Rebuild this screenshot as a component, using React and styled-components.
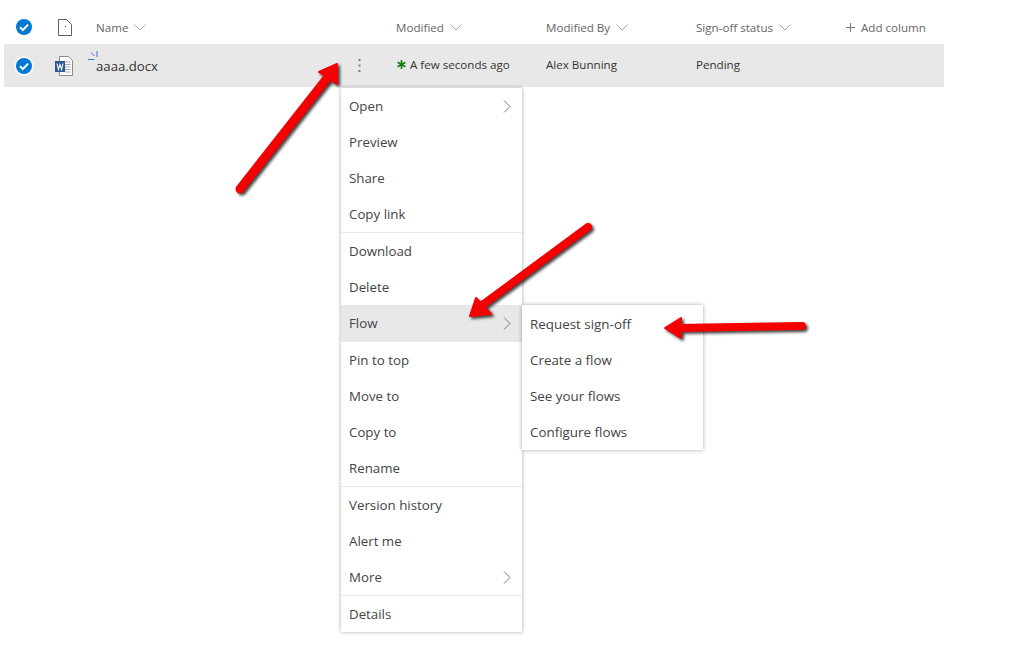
import React from 'react'
import styled, { createGlobalStyle } from 'styled-components'

const GlobalStyle = createGlobalStyle`
  html, body {
    margin: 0;
    padding: 0;
    background: #fff;
  }
  body {
    font-family: "Open Sans", "Liberation Sans", sans-serif;
    color: #333;
  }
`

const columns = '40px 52px 300px 150px 150px 150px 98px'

const menuGroups = [
  [{ label: 'Open', sub: true }, { label: 'Preview' }, { label: 'Share' }, { label: 'Copy link' }],
  [
    { label: 'Download' },
    { label: 'Delete' },
    { label: 'Flow', sub: true, active: true },
    { label: 'Pin to top' },
    { label: 'Move to' },
    { label: 'Copy to' },
    { label: 'Rename' },
  ],
  [{ label: 'Version history' }, { label: 'Alert me' }, { label: 'More', sub: true }],
  [{ label: 'Details' }],
]

const flowItems = ['Request sign-off', 'Create a flow', 'See your flows', 'Configure flows']

const CheckCircle = ({ ring }) => (
  <svg width="20" height="20" viewBox="0 0 20 20">
    {ring && <circle cx="10" cy="10" r="9.5" fill="#fff" />}
    <circle cx="10" cy="10" r="8" fill="#0078d4" />
    <path d="M6 10.3l2.8 2.7L14.2 7.6" fill="none" stroke="#fff" strokeWidth="2" />
  </svg>
)

const FileIcon = () => (
  <svg width="14" height="17" viewBox="0 0 14 17">
    <path d="M.5.5h8l5 5v11H.5z" fill="#fff" stroke="#5f5f5f" strokeWidth="1" />
    <rect x="7" y="7" width="1" height="1" fill="#444" />
  </svg>
)

const WordIcon = () => (
  <svg width="18" height="20" viewBox="0 0 18 20">
    <path d="M4.5.5h9l4 4v15h-13z" fill="#fff" stroke="#8a8a8a" />
    <path d="M10 6h5.5M10 8.5h5.5M10 11h5.5M10 13.5h5.5M10 16h5.5" stroke="#a5a5a5" />
    <rect x="0" y="5" width="10" height="11" fill="#2b5797" />
    <path d="M2 7.5l1.4 6 1.6-5 1.6 5 1.4-6" fill="none" stroke="#fff" strokeWidth="1.1" />
  </svg>
)

const NewMarks = () => (
  <svg width="10" height="10" viewBox="0 0 10 10">
    <path d="M0 8.5h6.5M3 1.5l3.5 3.5M9 0v6" stroke="#3f6fd8" strokeWidth="1" fill="none" />
  </svg>
)

const Chevron = () => (
  <svg width="12" height="7" viewBox="0 0 12 7">
    <path d="M.5.5l5.5 5.5 5.5-5.5" fill="none" stroke="#a6a6a6" strokeWidth="1" />
  </svg>
)

const SubChevron = () => (
  <svg width="8" height="13" viewBox="0 0 8 13">
    <path d="M1 .5l6 6-6 6" fill="none" stroke="#777" strokeWidth="1" />
  </svg>
)

const PlusIcon = () => (
  <svg width="9" height="9" viewBox="0 0 9 9">
    <path d="M4.5 0v9M0 4.5h9" stroke="#777" strokeWidth="1" />
  </svg>
)

const Asterisk = () => (
  <svg width="9" height="9" viewBox="0 0 9 9">
    <path d="M4.5 0v9M.6 2.2l7.8 4.6M.6 6.8l7.8-4.6" stroke="#107c10" strokeWidth="1.6" />
  </svg>
)

const MoreIcon = () => (
  <svg width="3" height="13" viewBox="0 0 3 13">
    <rect x="0.5" y="0" width="2" height="2" fill="#7a7a7a" />
    <rect x="0.5" y="5.5" width="2" height="2" fill="#7a7a7a" />
    <rect x="0.5" y="11" width="2" height="2" fill="#7a7a7a" />
  </svg>
)

const Arrows = () => (
  <ArrowLayer width="1015" height="648" viewBox="0 0 1015 648">
    <g fill="#f40000" stroke="#f40000" strokeLinejoin="round" strokeLinecap="round">
      <path d="M240 189L328 77" strokeWidth="9" fill="none" />
      <path d="M337 64L319 72L337 84Z" strokeWidth="2" />
      <path d="M588 227L481 306" strokeWidth="8" fill="none" />
      <path d="M470 316L476 298L491 314Z" strokeWidth="2" />
      <path d="M802 326L678 328" strokeWidth="8" fill="none" />
      <path d="M665 328L681 318L681 338Z" strokeWidth="2" />
    </g>
  </ArrowLayer>
)

const App = () => {
  return (
    <Page>
      <GlobalStyle />
      <HeaderRow>
        <IconCell><CheckCircle /></IconCell>
        <FileTypeCell><FileIcon /></FileTypeCell>
        <HeaderCell>Name <Chevron /></HeaderCell>
        <HeaderCell>Modified <Chevron /></HeaderCell>
        <HeaderCell>Modified By <Chevron /></HeaderCell>
        <HeaderCell>Sign-off status <Chevron /></HeaderCell>
        <AddColumn><PlusIcon /> Add column</AddColumn>
      </HeaderRow>
      <FileRow>
        <IconCell><CheckCircle ring /></IconCell>
        <FileTypeCell $wide><WordIcon /></FileTypeCell>
        <NameCell>
          <FileName>
            <NewBadge><NewMarks /></NewBadge>
            aaaa.docx
          </FileName>
          <MoreButton><MoreIcon /></MoreButton>
        </NameCell>
        <ModifiedCell><Asterisk /> A few seconds ago</ModifiedCell>
        <Cell>Alex Bunning</Cell>
        <Cell>Pending</Cell>
      </FileRow>

      <Menu>
        {menuGroups.map((group, i) => (
          <MenuGroup key={i}>
            {group.map((item) => (
              <MenuItem key={item.label} $active={item.active}>
                {item.label}
                {item.sub && <SubChevron />}
                {item.active && (
                  <SubMenu>
                    {flowItems.map((flow) => (
                      <SubMenuItem key={flow}>{flow}</SubMenuItem>
                    ))}
                  </SubMenu>
                )}
              </MenuItem>
            ))}
          </MenuGroup>
        ))}
      </Menu>
      <Arrows />
    </Page>
  )
}

export default App

const Page = styled.div`
  position: relative;
  width: 1015px;
  height: 648px;
  overflow: hidden;
  padding: 7px 0 0 4px;
  box-sizing: border-box;
`

const HeaderRow = styled.div`
  display: grid;
  grid-template-columns: ${columns};
  align-items: center;
  width: 940px;
  height: 37px;
`

const FileRow = styled.div`
  display: grid;
  grid-template-columns: ${columns};
  align-items: center;
  width: 940px;
  height: 43px;
  background: #e8e8e8;
`

const IconCell = styled.div`
  display: flex;
  align-items: center;
  justify-content: center;
  margin-top: 3px;

  ${FileRow} & {
    margin-top: 0;
  }
`

const FileTypeCell = styled(IconCell)`
  padding-right: ${(props) => (props.$wide ? '12px' : '10px')};
`

const HeaderCell = styled.div`
  display: flex;
  align-items: center;
  gap: 3px;
  margin-top: 4px;
  font-size: 11.6px;
  color: #666;
  white-space: pre;
`

const AddColumn = styled(HeaderCell)`
  gap: 3px;
`

const Cell = styled.div`
  font-size: 11.6px;
  color: #333;
  padding-bottom: 3px;
  white-space: pre;
`

const ModifiedCell = styled(Cell)`
  display: flex;
  align-items: center;
  padding-left: 1px;

  svg {
    margin-right: 1px;
  }
`

const NameCell = styled.div`
  display: flex;
  align-items: center;
  height: 100%;
`

const FileName = styled.div`
  position: relative;
  width: 262px;
  font-size: 13.2px;
  color: #333;
  padding-top: 1px;
`

const NewBadge = styled.span`
  position: absolute;
  left: -8px;
  top: -5px;
  line-height: 0;
`

const MoreButton = styled.div`
  display: flex;
  line-height: 0;
  margin-top: -1px;
`

const Menu = styled.div`
  position: absolute;
  left: 341px;
  top: 88px;
  width: 181px;
  background: #fff;
  box-shadow: 0 0 4px rgba(0, 0, 0, 0.35);
`

const MenuGroup = styled.div`
  & + & {
    border-top: 1px solid #e8e8e8;
  }
`

const MenuItem = styled.div`
  position: relative;
  display: flex;
  align-items: center;
  justify-content: space-between;
  height: 36px;
  padding: 0 11px ${(props) => (props.$active ? '1px' : '0')} 8px;
  font-size: 13.3px;
  color: #444;
  background: ${(props) => (props.$active ? '#e8e8e8' : 'transparent')};
`

const SubMenu = styled.div`
  position: absolute;
  left: 181px;
  top: 0;
  width: 181px;
  padding-top: 1px;
  background: #fff;
  box-shadow: 0 0 4px rgba(0, 0, 0, 0.35);
`

const SubMenuItem = styled.div`
  display: flex;
  align-items: center;
  height: 36px;
  padding: 0 8px;
  font-size: 13.4px;
  color: #444;
`

const ArrowLayer = styled.svg`
  position: absolute;
  left: 0;
  top: 0;
  pointer-events: none;
  filter: drop-shadow(2px 2px 1.5px rgba(0, 0, 0, 0.75));
`
